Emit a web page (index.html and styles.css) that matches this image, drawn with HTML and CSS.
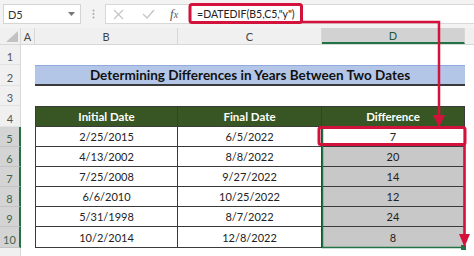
FILE: index.html
```html
<!DOCTYPE html>
<html>
<head>
<meta charset="utf-8">
<link rel="stylesheet" href="styles.css">
</head>
<body>
<div class="app">
  <div class="fbar">
    <div class="namebox"><span>D5</span><svg class="caret" width="7" height="4" viewBox="0 0 7 4"><path d="M0 0h7L3.5 4z" fill="#777"/></svg></div>
    <div class="grip"><svg width="3" height="10" viewBox="0 0 3 10"><circle cx="1.5" cy="1.5" r="1" fill="#aaa"/><circle cx="1.5" cy="5" r="1" fill="#aaa"/><circle cx="1.5" cy="8.5" r="1" fill="#aaa"/></svg></div>
    <div class="fx-area">
      <svg class="ico ico-x" width="11" height="11" viewBox="0 0 11 11"><path d="M1 1L10 10M10 1L1 10" stroke="#c4c4c4" stroke-width="1.2" fill="none"/></svg>
      <svg class="ico ico-chk" width="13" height="10" viewBox="0 0 13 10"><path d="M1 5L5 9L12 1" stroke="#c4c4c4" stroke-width="1.2" fill="none"/></svg>
      <span class="fx">f<span class="fx-x">x</span></span>
      <div class="formula">=DATEDIF(B5,C5,"y")</div>
    </div>
  </div>

  <div class="sheet">
    <div class="row colhdr">
      <div class="corner"><svg width="12" height="11" viewBox="0 0 12 11"><path d="M12 0V11H0z" fill="#c2c2c2"/></svg></div>
      <div class="ch">A</div>
      <div class="ch">B</div>
      <div class="ch">C</div>
      <div class="ch ch-sel">D</div>
      <div class="ch ch-last"></div>
    </div>

    <div class="row r20"><div class="rh">1</div></div>
    <div class="row r21"><div class="rh">2</div><div class="title">Determining Differences in Years Between Two Dates</div></div>
    <div class="row r20"><div class="rh">3</div></div>
    <div class="row r21">
      <div class="rh">4</div><div></div>
      <div class="th th-first">Initial Date</div><div class="th">Final Date</div><div class="th">Difference</div>
    </div>
    <div class="row r20">
      <div class="rh rh-sel">5</div><div></div>
      <div class="td td-first">2/25/2015</div><div class="td">6/5/2022</div><div class="td td-active">7</div>
    </div>
    <div class="row r20">
      <div class="rh rh-sel">6</div><div></div>
      <div class="td td-first">4/13/2002</div><div class="td">8/8/2022</div><div class="td td-sel">20</div>
    </div>
    <div class="row r20">
      <div class="rh rh-sel">7</div><div></div>
      <div class="td td-first">7/25/2008</div><div class="td">9/27/2022</div><div class="td td-sel">14</div>
    </div>
    <div class="row r20">
      <div class="rh rh-sel">8</div><div></div>
      <div class="td td-first">6/6/2010</div><div class="td">10/25/2022</div><div class="td td-sel">12</div>
    </div>
    <div class="row r20">
      <div class="rh rh-sel">9</div><div></div>
      <div class="td td-first">5/31/1998</div><div class="td">8/7/2022</div><div class="td td-sel">24</div>
    </div>
    <div class="row r21">
      <div class="rh rh-sel">10</div><div></div>
      <div class="td td-first">10/2/2014</div><div class="td">12/8/2022</div><div class="td td-sel">8</div>
    </div>
    <div class="row r20"><div class="rh"></div></div>
  </div>

  <svg class="annot" width="474" height="256" viewBox="0 0 474 256">
    <rect x="322.5" y="127.5" width="142" height="120" fill="none" stroke="#217346" stroke-width="1.5"/>
    <rect x="461" y="245" width="5" height="5" fill="#217346"/>
    <rect x="190" y="4.5" width="111.5" height="18" rx="2" fill="none" stroke="#d3123c" stroke-width="3"/>
    <path d="M301.5 22H439V118" fill="none" stroke="#d3123c" stroke-width="2.5"/>
    <path d="M433 115H445L439 127Z" fill="#d3123c"/>
    <rect x="319" y="127.5" width="146" height="17" rx="2" fill="none" stroke="#d3123c" stroke-width="3"/>
    <path d="M464.5 144V236" fill="none" stroke="#d3123c" stroke-width="2.5"/>
    <path d="M459 234H470L464.5 247Z" fill="#d3123c"/>
  </svg>
</div>
</body>
</html>
```

FILE: styles.css
```css
body {
  margin: 0;
  width: 474px;
  height: 256px;
  overflow: hidden;
  background: #ffffff;
  font-family: "Lato", "Open Sans", sans-serif;
}

.app {
  position: relative;
  width: 474px;
  height: 256px;
  overflow: hidden;
}

/* formula bar */
.fbar {
  height: 28px;
  box-sizing: border-box;
  background: #f3f3f3;
  display: flex;
  align-items: center;
  padding-left: 3px;
}

.namebox {
  width: 78px;
  height: 20px;
  box-sizing: border-box;
  background: #fff;
  border: 1px solid #d4d4d4;
  display: flex;
  align-items: center;
  justify-content: space-between;
  padding: 0 5px 0 4px;
  font-size: 11px;
  color: #333;
}

.grip {
  width: 24px;
  display: flex;
  justify-content: center;
  align-items: center;
}

.fx-area {
  flex: 1;
  height: 20px;
  box-sizing: border-box;
  background: #fff;
  border: 1px solid #d8d8d8;
  border-right: none;
  display: flex;
  align-items: center;
}

.ico-x { margin-left: 7px; }
.ico-chk { margin-left: 18px; }

.fx {
  margin-left: 15px;
  font-family: "Liberation Serif", serif;
  font-style: italic;
  font-size: 13px;
  color: #555;
}
.fx-x { font-size: 10px; }

.formula {
  margin-left: 19px;
  font-size: 10.5px;
  color: #222;
  white-space: nowrap;
}

/* sheet */
.sheet {
  display: flex;
  flex-direction: column;
}

.row {
  display: grid;
  grid-template-columns: 21px 14px 143px 144px 143px 9px;
}

.r20 { height: 20px; }
.r21 { height: 21px; }

.colhdr {
  height: 17px;
  background: #f0f0f0;
  border-bottom: 1px solid #d8d8d8;
  box-sizing: border-box;
  font-size: 11px;
  color: #444;
}

.corner {
  display: flex;
  justify-content: flex-end;
  align-items: flex-end;
  padding: 0 2px 2px 0;
  border-right: 1px solid #d8d8d8;
}

.ch {
  display: flex;
  justify-content: center;
  align-items: center;
  border-right: 1px solid #d8d8d8;
}

.ch-sel {
  background: #d2d2d2;
  border-bottom: 2px solid #217346;
  color: #1e5a38;
}

.ch-last { border-right: none; }

.rh {
  background: #f0f0f0;
  border-right: 1px solid #d8d8d8;
  border-bottom: 1px solid #e2e2e2;
  box-sizing: border-box;
  display: flex;
  justify-content: center;
  align-items: flex-end;
  padding-bottom: 1px;
  font-size: 11px;
  color: #555;
}

.rh-sel {
  background: #d4d4d4;
  border-right: 2px solid #217346;
  border-bottom-color: #c4c4c4;
  color: #3e6650;
}

.title {
  grid-column: 3 / 6;
  background: #b4c6e7;
  border-top: 1px solid #8faadc;
  border-bottom: 2px solid #3a3a3a;
  box-sizing: border-box;
  display: flex;
  justify-content: center;
  align-items: center;
  font-weight: 700;
  font-size: 13.5px;
  color: #111;
}

.th {
  background: #375623;
  color: #fff;
  font-weight: 700;
  font-size: 11.5px;
  display: flex;
  justify-content: center;
  align-items: center;
  border-right: 1px solid #3a3a3a;
  border-top: 1px solid #3a3a3a;
  border-bottom: 1px solid #3a3a3a;
  box-sizing: border-box;
}

.td {
  background: #fff;
  color: #222;
  font-size: 11px;
  display: flex;
  justify-content: center;
  align-items: center;
  border-right: 1px solid #3a3a3a;
  border-bottom: 1px solid #3a3a3a;
  box-sizing: border-box;
}

.th-first, .td-first { border-left: 1px solid #3a3a3a; }

.td-sel { background: #c8c8c8; }

.annot {
  position: absolute;
  left: 0;
  top: 0;
  pointer-events: none;
}
```
